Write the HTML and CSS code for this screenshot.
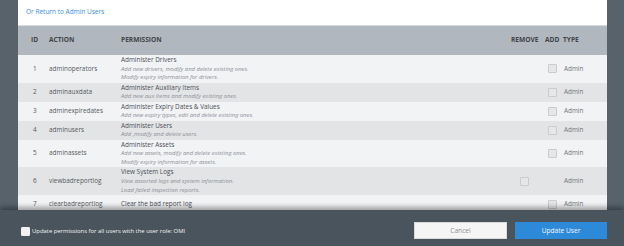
FILE: index.html
```html
<!DOCTYPE html>
<html lang="en">
<head>
  <meta charset="UTF-8">
  <title>Edit Permissions</title>
  <link rel="stylesheet" href="styles.css">
</head>
<body>
  <div class="layout">
    <div class="side"></div>

    <!-- Permissions panel -->
    <main class="panel">
      <div class="panel-top">
        <a href="#" class="back-link">Or Return to Admin Users</a>
      </div>

      <div class="perm-table">
        <div class="row head">
          <div class="c-id">ID</div>
          <div class="c-action">ACTION</div>
          <div class="c-perm">PERMISSION</div>
          <div class="c-remove">REMOVE</div>
          <div class="c-add">ADD</div>
          <div class="c-type">TYPE</div>
        </div>

        <div class="row">
          <div class="c-id">1</div>
          <div class="c-action">adminoperators</div>
          <div class="c-perm">
            <div class="title">Administer Drivers</div>
            <div class="desc">Add new drivers, modify and delete existing ones.</div>
            <div class="desc">Modify expiry information for drivers.</div>
          </div>
          <div class="c-remove"></div>
          <div class="c-add"><span class="check"></span></div>
          <div class="c-type">Admin</div>
        </div>

        <div class="row alt">
          <div class="c-id">2</div>
          <div class="c-action">adminauxdata</div>
          <div class="c-perm">
            <div class="title">Administer Auxiliary Items</div>
            <div class="desc">Add new aux items and modify existing ones.</div>
          </div>
          <div class="c-remove"></div>
          <div class="c-add"><span class="check"></span></div>
          <div class="c-type">Admin</div>
        </div>

        <div class="row">
          <div class="c-id">3</div>
          <div class="c-action">adminexpiredates</div>
          <div class="c-perm">
            <div class="title">Administer Expiry Dates &amp; Values</div>
            <div class="desc">Add new expiry types, edit and delete existing ones.</div>
          </div>
          <div class="c-remove"></div>
          <div class="c-add"><span class="check"></span></div>
          <div class="c-type">Admin</div>
        </div>

        <div class="row alt">
          <div class="c-id">4</div>
          <div class="c-action">adminusers</div>
          <div class="c-perm">
            <div class="title">Administer Users</div>
            <div class="desc">Add ,modify and delete users.</div>
          </div>
          <div class="c-remove"></div>
          <div class="c-add"><span class="check"></span></div>
          <div class="c-type">Admin</div>
        </div>

        <div class="row">
          <div class="c-id">5</div>
          <div class="c-action">adminassets</div>
          <div class="c-perm">
            <div class="title">Administer Assets</div>
            <div class="desc">Add new assets, modify and delete existing ones.</div>
            <div class="desc">Modify expiry information for assets.</div>
          </div>
          <div class="c-remove"></div>
          <div class="c-add"><span class="check"></span></div>
          <div class="c-type">Admin</div>
        </div>

        <div class="row alt">
          <div class="c-id">6</div>
          <div class="c-action">viewbadreportlog</div>
          <div class="c-perm">
            <div class="title">View System Logs</div>
            <div class="desc">View assorted logs and system information.</div>
            <div class="desc">Load failed inspection reports.</div>
          </div>
          <div class="c-remove"><span class="check"></span></div>
          <div class="c-add"></div>
          <div class="c-type">Admin</div>
        </div>

        <div class="row">
          <div class="c-id">7</div>
          <div class="c-action">clearbadreportlog</div>
          <div class="c-perm">
            <div class="title">Clear the bad report log</div>
          </div>
          <div class="c-remove"></div>
          <div class="c-add"><span class="check"></span></div>
          <div class="c-type">Admin</div>
        </div>
      </div>
    </main>

    <div class="side"></div>
  </div>

  <!-- Footer actions -->
  <footer class="actions">
    <label class="all-users">
      <span class="check light"></span>
      Update permissions for all users with the user role: OMI
    </label>
    <div class="buttons">
      <button class="btn btn-cancel">Cancel</button>
      <button class="btn btn-primary">Update User</button>
    </div>
  </footer>
</body>
</html>
```

FILE: styles.css
```css
* {
  margin: 0;
  padding: 0;
  box-sizing: border-box;
}

body {
  font-family: 'Open Sans', 'Noto Sans', sans-serif;
  background-color: #4a545c;
  width: 624px;
  height: 246px;
  overflow: hidden;
  display: flex;
  flex-direction: column;
}

/* Layout */
.layout {
  display: grid;
  grid-template-columns: 18px 589px 17px;
  height: 210px;
  overflow: hidden;
}

.side {
  background-color: #57626b;
}

.panel {
  background-color: #f2f3f5;
  overflow: hidden;
}

.panel-top {
  background-color: #fff;
  height: 25px;
  display: flex;
  align-items: flex-start;
  padding: 8px 0 0 8px;
}

.back-link {
  color: #3b8fdc;
  font-size: 6.5px;
  line-height: 8px;
  text-decoration: none;
}

/* Table */
.row {
  display: grid;
  grid-template-columns: 31px 72px 1fr 34px 18px 44px;
  align-items: center;
  font-size: 6.4px;
  line-height: 8.7px;
  color: #555a60;
  background-color: #f2f3f5;
}

.row.alt {
  background-color: #e3e4e6;
}

.row.head {
  height: 30px;
  background-color: #b1b7be;
  border-top: 1px solid #d8dce0;
  font-size: 6.6px;
  font-weight: 700;
  color: #3f454b;
}

.c-id {
  padding-left: 13px;
}

.row:not(.head) .c-id {
  padding-left: 15px;
}

.c-perm {
  padding: 0.8px 0;
}

.title {
  line-height: 8.7px;
  color: #4a4f55;
}

.desc {
  font-size: 5.9px;
  font-style: italic;
  color: #8b9096;
  line-height: 8.7px;
}

.row:not(.head) .c-remove {
  padding-left: 9px;
}

.row:not(.head) .c-add {
  padding-left: 3px;
}

.row:not(.head) .c-type {
  padding-left: 1px;
  font-size: 6.4px;
  color: #6f7479;
}

.row:not(.head) {
  min-height: 18px;
}

.check {
  display: block;
  width: 9px;
  height: 9px;
  background-color: #e6e7e9;
  border: 1px solid #c9cbce;
  border-radius: 1px;
}

.check.light {
  background-color: #f1f1f1;
  border-color: #f1f1f1;
}

/* Footer */
.actions {
  flex: 1;
  display: flex;
  align-items: center;
  justify-content: space-between;
  padding: 4px 17px 0 21px;
  background-color: #4a545c;
  box-shadow: 0 -3px 5px rgba(0, 0, 0, 0.35);
  position: relative;
}

.all-users {
  display: flex;
  align-items: center;
  gap: 2px;
  color: #f2f4f5;
  font-size: 5.9px;
  padding-top: 2px;
}

.buttons {
  display: flex;
  gap: 8px;
}

.btn {
  font-family: 'Open Sans', 'Noto Sans', sans-serif;
  font-size: 6.6px;
  width: 93px;
  height: 17px;
  border: none;
}

.btn-cancel {
  background-color: #f5f5f6;
  color: #8d9196;
  border: 1px solid #d9dbde;
}

.btn-primary {
  width: 92px;
  background-color: #2c8ad8;
  color: #f4f8fc;
}
```
